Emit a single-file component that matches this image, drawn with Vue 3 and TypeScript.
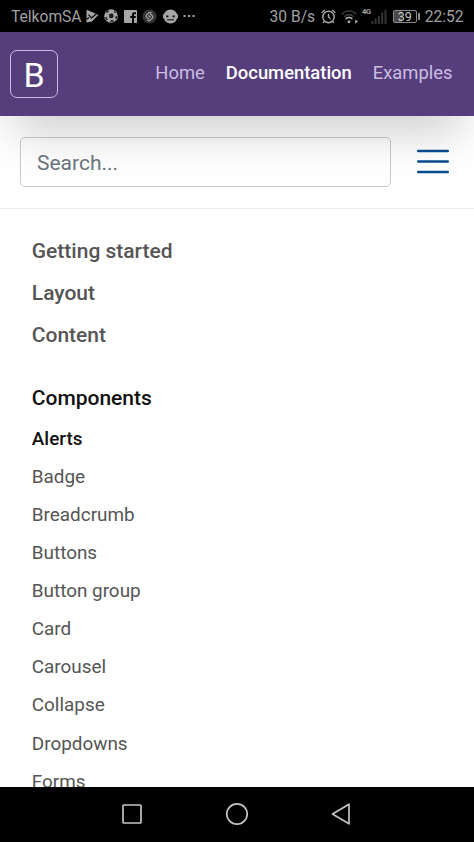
<script setup lang="ts">
interface NavLink {
  label: string
  active?: boolean
}

const navLinks: NavLink[] = [
  { label: 'Home' },
  { label: 'Documentation', active: true },
  { label: 'Examples' },
]

const sections: string[] = ['Getting started', 'Layout', 'Content']

const components: NavLink[] = [
  { label: 'Alerts', active: true },
  { label: 'Badge' },
  { label: 'Breadcrumb' },
  { label: 'Buttons' },
  { label: 'Button group' },
  { label: 'Card' },
  { label: 'Carousel' },
  { label: 'Collapse' },
  { label: 'Dropdowns' },
  { label: 'Forms' },
]
</script>

<template>
  <div class="screen">
    <div class="status">
      <span class="carrier">TelkomSA</span>
      <div class="notices">
        <svg width="13" height="14" viewBox="0 0 13 14">
          <path d="M.5.800 12.500 5.800 6 12.500.500 13.500z" fill="#a6a6a6" />
          <path d="m2.500 5.700 3 3.200 6.500-5.400M.500 10.300l2.600-1.800M12.500 8 7.500 12.500" fill="none" stroke="#000" stroke-width="1.200" />
        </svg>
        <svg width="14" height="14" viewBox="0 0 14 14">
          <circle cx="7" cy="7" r="6.800" fill="#a6a6a6" />
          <path d="m5.200 5 3.200-.7 1.500 2.600-1.800 2.500-3-.8zM2 2.400l2.800-1.500-.3 2-1.800 1.400zM9.800 1.200l2.600 2.600-2 .1zM.8 8l2 .2.9 2.400-1.200.8zM6 13l1.300-2 2.600.4.3 1.200zM11.500 7.400l1.800-.7-.6 3-1.500 0z" fill="#1c1c1c" />
        </svg>
        <svg width="13" height="13" viewBox="0 0 13 13">
          <path d="M.7 0h11.600q.7 0 .7.7v11.600q0 .7-.7.7H10V8h1.600l.3-2H10V5q0-1 1-1h1V2.200h-1.700Q8 2.200 8 4.600V6H6.300v2H8v5H.7q-.7 0-.7-.7V.7Q0 0 .7 0z" fill="#a6a6a6" />
        </svg>
        <svg width="15" height="15" viewBox="0 0 15 15">
          <circle cx="7.500" cy="7.500" r="7" fill="#343434" />
          <path d="M7 10.200 5 8.700Q3.300 7 5 5.400l2-1.600q1.300-.9 2.500 0M8 4.800l2 1.500q1.700 1.700 0 3.300l-2 1.600q-1.300.9-2.500 0M6.300 6.500l2.400 2" fill="none" stroke="#a6a6a6" stroke-width="1.200" />
        </svg>
        <svg width="15" height="15" viewBox="0 0 15 15">
          <circle cx="7.500" cy="7.500" r="6.900" fill="#a6a6a6" />
          <rect y="5" width="15" height="4.600" rx="1.400" fill="#a6a6a6" />
          <path d="M3.200 6.400h2.200v1.800H3.200zM9.600 6.400h2.200v1.800H9.600z" fill="#111" />
          <path d="M4 10.800h7" fill="none" stroke="#222" stroke-width="1.200" />
        </svg>
        <svg width="12" height="4" viewBox="0 0 12 4">
          <path d="M.5 1h2v2h-2zM5 1h2v2H5zM9.500 1h2v2h-2z" fill="#a6a6a6" />
        </svg>
      </div>
      <div class="system">
        <span class="speed">30 B/s</span>
        <svg class="alarm" width="15" height="15" viewBox="0 0 15 15" fill="none" stroke="#aaa" stroke-width="1.400">
          <circle cx="7.500" cy="8" r="5.700" />
          <path d="M7.500 4.700V8l2 1.700M.7 3.700 3.800 1M14.300 3.700 11.200 1M3.500 12.200l-1.400 1.700M11.500 12.200l1.400 1.700" />
        </svg>
        <svg class="wifi" width="18" height="15" viewBox="0 0 18 15" fill="none" stroke-width="1.500">
          <path d="M.8 5.100Q8 -1.600 15.200 5.100M3.200 7.700Q8 3.500 12.800 7.700" stroke="#3d3d3d" />
          <path d="M4.600 9.900q3.400-2.600 6.800 0" stroke="#b5b5b5" />
          <circle cx="8" cy="12.800" r="1.400" fill="#b5b5b5" />
          <path d="M14.200 10.400l2.800 2.200-2.800 2.200z" fill="#aaa" />
        </svg>
        <span class="gen">4G</span>
        <svg class="signal" width="16" height="15" viewBox="0 0 16 15">
          <path d="M.3 12h2v3h-2zM3.600 9.600h2V15h-2zM6.900 7h2v8h-2zM10.200 3.800h2V15h-2zM13.500.700h2V15h-2z" fill="#343434" />
        </svg>
        <div class="battery"><span>39</span></div>
        <span class="clock">22:52</span>
      </div>
    </div>

    <header class="navbar">
      <a class="brand">B</a>
      <nav class="links">
        <a v-for="l in navLinks" :key="l.label" :class="{ active: l.active }">{{ l.label }}</a>
      </nav>
    </header>

    <div class="searchbar">
      <div class="field">Search...</div>
      <svg class="menu" width="32" height="25" viewBox="0 0 32 25">
        <path d="M1.300 2h29.400M1.300 12.500h29.400M1.300 23h29.400" stroke="#0a4b8d" stroke-width="2.600" stroke-linecap="round" />
      </svg>
    </div>

    <main class="toc">
      <a v-for="s in sections" :key="s" class="section">{{ s }}</a>
      <a class="section current">Components</a>
      <a v-for="c in components" :key="c.label" class="item" :class="{ active: c.active }">{{ c.label }}</a>
    </main>

    <footer class="keys">
      <svg width="22" height="22" viewBox="0 0 22 22"><rect x="2" y="2" width="18" height="18" rx=".8" /></svg>
      <svg width="24" height="24" viewBox="0 0 24 24"><circle cx="12" cy="12" r="10.200" /></svg>
      <svg width="20" height="24" viewBox="0 0 20 24"><path d="M18 2.200v19.600L1.500 12z" stroke-linejoin="round" /></svg>
    </footer>
  </div>
</template>

<style>
body {
  margin: 0;
}
</style>

<style scoped>
.screen {
  display: flex;
  flex-direction: column;
  width: 474px;
  height: 842px;
  overflow: hidden;
  background: #fff;
  font-family: Roboto, "Liberation Sans", sans-serif;
}
.status {
  flex: none;
  box-sizing: border-box;
  height: 31.500px;
  padding: 2px 10.500px 0 11px;
  display: flex;
  align-items: center;
  background: #000;
  color: #a0a0a0;
  font-size: 15.600px;
  white-space: nowrap;
}
.status svg {
  flex: none;
}
.notices {
  display: flex;
  align-items: center;
  gap: 5.600px;
  margin: -1px 0 0 4px;
}
.system {
  display: flex;
  align-items: center;
  margin-left: auto;
}
.alarm {
  margin: -1px 0 0 6px;
}
.wifi {
  margin: -1px 0 0 4.500px;
}
.gen {
  width: 9px;
  margin: -9px 0 0 3px;
  font-size: 8px;
  line-height: 8px;
  letter-spacing: -0.500px;
  font-weight: 700;
}
.signal {
  margin-top: -1px;
}
.battery {
  position: relative;
  box-sizing: border-box;
  width: 24px;
  height: 13px;
  margin: 0 8px 0 6px;
  border: 1px solid #8a8a8a;
  border-radius: 2px;
  background: linear-gradient(90deg, #484848 38%, #050505 38%);
  font-size: 12.500px;
  line-height: 11px;
  text-align: center;
  color: #c8c8c8;
}
.battery::after {
  content: "";
  position: absolute;
  right: -4px;
  top: 2px;
  width: 2px;
  height: 7px;
  background: #8a8a8a;
}
.navbar {
  position: relative;
  z-index: 2;
  flex: none;
  box-sizing: border-box;
  height: 84px;
  padding: 0 21.500px 0 10px;
  display: flex;
  align-items: center;
  justify-content: space-between;
  background: #563d7c;
  box-shadow: 0 28px 48px -12px rgba(0, 0, 0, 0.2);
}
.brand {
  box-sizing: border-box;
  width: 48px;
  height: 48px;
  border: 1px solid #cdbde5;
  border-radius: 7px;
  color: #fff;
  font-size: 34px;
  line-height: 48px;
  text-align: center;
}
.links {
  display: flex;
  gap: 21px;
  padding-bottom: 2px;
  font-size: 18.400px;
  color: #cbbde2;
}
.links .active {
  color: #fff;
  font-weight: 500;
}
.searchbar {
  flex: none;
  box-sizing: border-box;
  height: 93px;
  padding: 0 25px 0 20px;
  display: flex;
  align-items: center;
  justify-content: space-between;
  border-bottom: 1px solid #ebebeb;
}
.field {
  box-sizing: border-box;
  width: 371px;
  height: 50px;
  padding-left: 16px;
  border: 1px solid #c6cbd0;
  border-radius: 5px;
  font-size: 21px;
  line-height: 50px;
  color: #6c757d;
}
.toc {
  flex: 1;
  min-height: 0;
  overflow: hidden;
  display: flex;
  flex-direction: column;
  padding: 21px 31.800px 0;
}
.section {
  flex: none;
  height: 42px;
  line-height: 42px;
  font-size: 21px;
  font-weight: 500;
  color: #555;
}
.current {
  margin-top: 21px;
  color: #111;
}
.item {
  flex: none;
  height: 38.150px;
  line-height: 40px;
  font-size: 18.900px;
  color: #555;
}
.item.active {
  color: #111;
  font-weight: 500;
}
.keys {
  flex: none;
  box-sizing: border-box;
  height: 55.500px;
  padding-left: 120.500px;
  display: flex;
  align-items: center;
  gap: 82px;
  background: #000;
}
.keys svg {
  fill: none;
  stroke: #c4c4c4;
  stroke-width: 1.700;
}
</style>
